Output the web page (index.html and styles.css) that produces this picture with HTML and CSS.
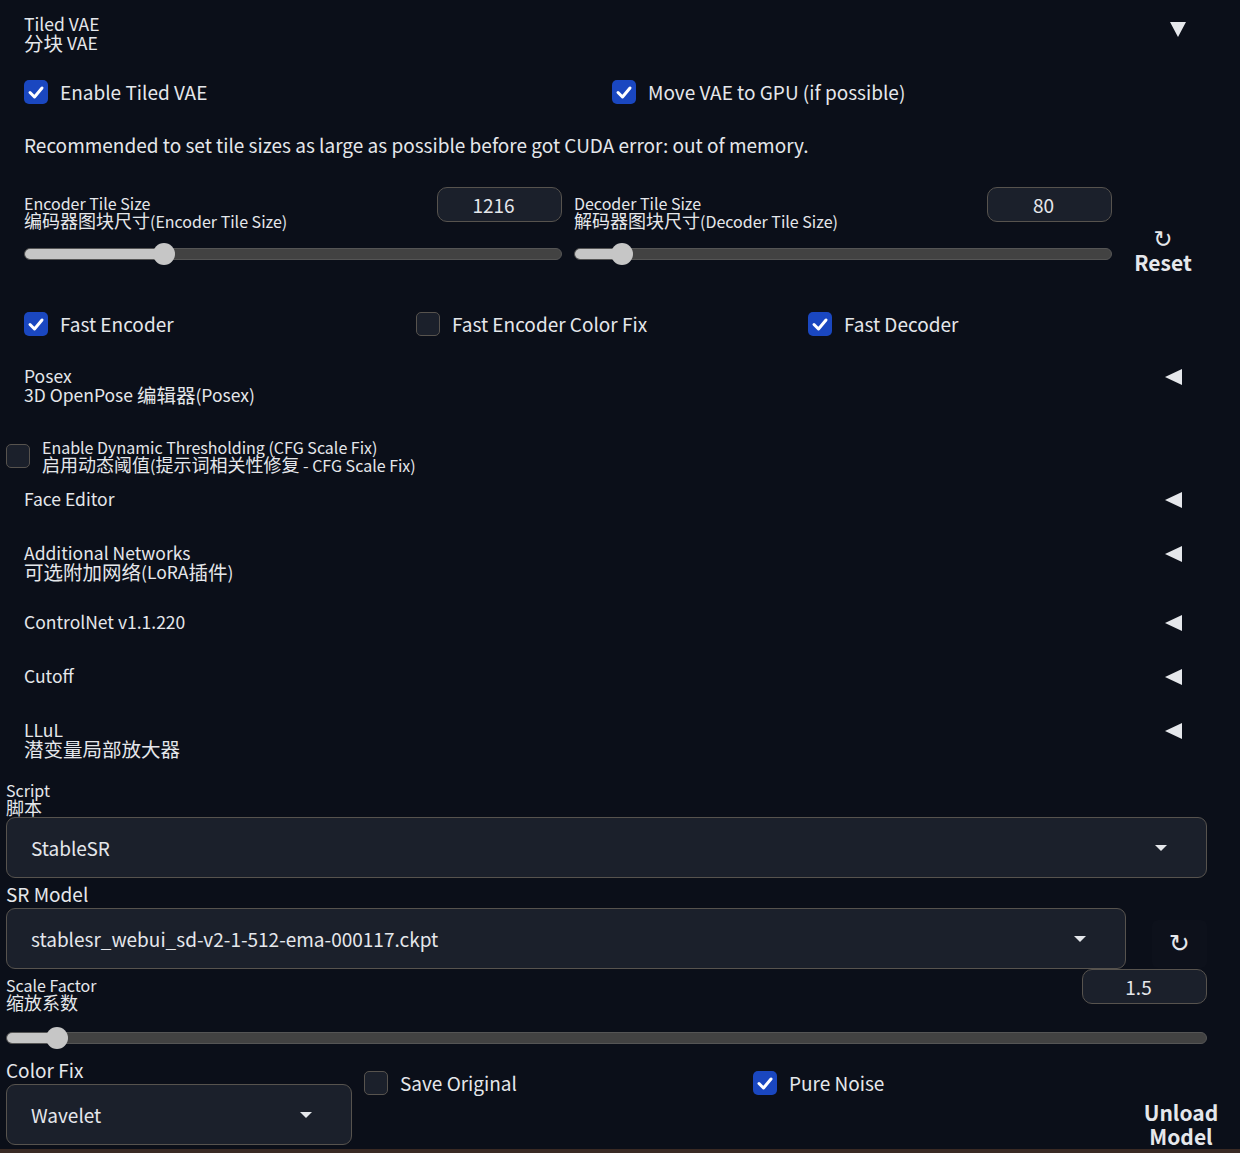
FILE: index.html
```html
<!DOCTYPE html>
<html lang="zh">
<head>
  <meta charset="UTF-8">
  <title>StableSR</title>
  <link rel="stylesheet" href="styles.css">
</head>
<body>

<div class="tiled">
  <div class="acc-head">
    <div class="acc-title">Tiled VAE<br><span class="zh">分块</span> VAE</div>
    <span class="arrow-down"></span>
  </div>

  <div class="check-row two">
    <label class="check"><span class="box on"></span>Enable Tiled VAE</label>
    <label class="check"><span class="box on"></span>Move VAE to GPU (if possible)</label>
  </div>

  <div class="note">Recommended to set tile sizes as large as possible before got CUDA error: out of memory.</div>

  <div class="tiles">
    <div class="tile">
      <div class="tile-top">
        <div class="small-label">Encoder Tile Size<br><span class="zh">编码器图块尺寸</span>(Encoder Tile Size)</div>
        <div class="num">1216</div>
      </div>
      <div class="slider"><div class="fill" style="width: 26%"></div></div>
    </div>
    <div class="tile">
      <div class="tile-top">
        <div class="small-label">Decoder Tile Size<br><span class="zh">解码器图块尺寸</span>(Decoder Tile Size)</div>
        <div class="num">80</div>
      </div>
      <div class="slider"><div class="fill" style="width: 8.7%"></div></div>
    </div>
    <div class="reset">
      <span class="refresh">↻</span>
      <span>Reset</span>
    </div>
  </div>

  <div class="check-row three">
    <label class="check"><span class="box on"></span>Fast Encoder</label>
    <label class="check"><span class="box"></span>Fast Encoder Color Fix</label>
    <label class="check"><span class="box on"></span>Fast Decoder</label>
  </div>
</div>

<div class="acc first">
  <div class="acc-title">Posex<br>3D OpenPose <span class="zh">编辑器</span>(Posex)</div>
  <span class="arrow-left"></span>
</div>

<label class="dyn">
  <span class="box"></span>
  <span class="small-label">Enable Dynamic Thresholding (CFG Scale Fix)<br><span class="zh">启用动态阈值</span>(<span class="zh">提示词相关性修复</span> - CFG Scale Fix)</span>
</label>

<div class="acc face">
  <div class="acc-title">Face Editor</div>
  <span class="arrow-left"></span>
</div>
<div class="acc">
  <div class="acc-title">Additional Networks<br><span class="zh">可选附加网络</span>(LoRA<span class="zh">插件</span>)</div>
  <span class="arrow-left"></span>
</div>
<div class="acc tight">
  <div class="acc-title">ControlNet v1.1.220</div>
  <span class="arrow-left"></span>
</div>
<div class="acc">
  <div class="acc-title">Cutoff</div>
  <span class="arrow-left"></span>
</div>
<div class="acc">
  <div class="acc-title">LLuL<br><span class="zh">潜变量局部放大器</span></div>
  <span class="arrow-left"></span>
</div>

<div class="script">
  <div class="small-label">Script<br><span class="zh">脚本</span></div>
  <div class="dropdown"><span>StableSR</span><span class="caret"></span></div>

  <div class="label">SR Model</div>
  <div class="model-row">
    <div class="dropdown grow"><span>stablesr_webui_sd-v2-1-512-ema-000117.ckpt</span><span class="caret"></span></div>
    <div class="refresh-btn">↻</div>
  </div>

  <div class="scale-top">
    <div class="small-label">Scale Factor<br><span class="zh">缩放系数</span></div>
    <div class="num">1.5</div>
  </div>
  <div class="slider"><div class="fill" style="width: 4.2%"></div></div>

  <div class="bottom-row">
    <div>
      <div class="label">Color Fix</div>
      <div class="dropdown narrow"><span>Wavelet</span><span class="caret"></span></div>
    </div>
    <label class="check low"><span class="box"></span>Save Original</label>
    <label class="check low"><span class="box on"></span>Pure Noise</label>
    <div class="unload">Unload<br>Model</div>
  </div>
</div>

<div class="footer-line"></div>

</body>
</html>
```

FILE: styles.css
```css
:root {
  --bg: #0b0f19;
  --text: #e5e7eb;
  --input-bg: #1b202b;
  --border: #57534e;
  --blue: #1a47c0;
  --track: #424242;
  --knob: #c6c6c6;
}

body {
  margin: 0;
  background: var(--bg);
  color: var(--text);
  font-family: "Noto Sans CJK SC", "Noto Sans", sans-serif;
  width: 1240px;
  height: 1153px;
  overflow: hidden;
}

/* bigger CJK glyphs without growing the line box */
.zh { line-height: 0; }

.tiled {
  padding: 14px 0 0 24px;
}

.acc-head,
.acc {
  display: flex;
  justify-content: space-between;
  align-items: flex-start;
}

.acc-head { padding-right: 54px; }

.acc {
  margin-top: 35px;
  padding: 0 58px 0 24px;
}

.acc.first { margin-top: 30px; }
.acc.face { margin-top: 15px; }
.acc.tight { margin-top: 31px; }

.acc-title {
  font-size: 17.5px;
  line-height: 19px;
}

.acc-title .zh {
  font-size: 19.5px;
  vertical-align: -1px;
}

.arrow-down {
  margin-top: 8px;
  width: 0;
  height: 0;
  border-left: 8px solid transparent;
  border-right: 8px solid transparent;
  border-top: 15px solid var(--text);
}

.arrow-left {
  margin-top: 3px;
  width: 0;
  height: 0;
  border-top: 8px solid transparent;
  border-bottom: 8px solid transparent;
  border-right: 17px solid var(--text);
}

.check-row {
  display: grid;
  margin-top: 28px;
}

.check-row.two { grid-template-columns: 588px 588px; }
.check-row.three { grid-template-columns: 392px 392px 392px; margin-top: 38px; }

.check {
  display: flex;
  align-items: center;
  gap: 12px;
  font-size: 19px;
  line-height: 24px;
}

.box {
  flex: none;
  width: 24px;
  height: 24px;
  box-sizing: border-box;
  border-radius: 5px;
  background: var(--input-bg);
  border: 1px solid var(--border);
}

.box.on {
  border: none;
  background: var(--blue) url("data:image/svg+xml,%3Csvg xmlns='http://www.w3.org/2000/svg' viewBox='0 0 24 24'%3E%3Cpolyline points='6,12.5 10.5,17 18,8' fill='none' stroke='white' stroke-width='3' stroke-linecap='round' stroke-linejoin='round'/%3E%3C/svg%3E") center / 24px no-repeat;
}

.note {
  margin-top: 29px;
  font-size: 19px;
  line-height: 24px;
}

.tiles {
  display: flex;
  gap: 12px;
  margin-top: 30px;
}

.tile { width: 538px; }

.tile-top,
.scale-top {
  display: flex;
  justify-content: space-between;
  align-items: flex-start;
}

.small-label {
  font-size: 16px;
  line-height: 18px;
}

.small-label .zh { font-size: 18px; }

.tile-top .small-label,
.scale-top .small-label { margin-top: 7px; }

.num {
  width: 125px;
  height: 35px;
  box-sizing: border-box;
  padding-right: 12px;
  border: 1px solid var(--border);
  border-radius: 10px;
  background: var(--input-bg);
  text-align: center;
  font-size: 19px;
  line-height: 33px;
}

.slider {
  position: relative;
  margin-top: 13px;
  height: 12px;
  border: 1px solid #555;
  border-radius: 7px;
  background: var(--track);
  box-sizing: border-box;
  top: 5px;
  margin-bottom: 10px;
}

.fill {
  position: relative;
  height: 100%;
  background: var(--knob);
  border-radius: 7px 0 0 7px;
}

.fill::after {
  content: "";
  position: absolute;
  right: -11px;
  top: -6px;
  width: 22px;
  height: 22px;
  border-radius: 50%;
  background: var(--knob);
}

.reset {
  width: 76px;
  margin-top: 41px;
  margin-left: 1px;
  display: flex;
  flex-direction: column;
  align-items: center;
  font-size: 21px;
  font-weight: bold;
  line-height: 23px;
}

.refresh {
  font-family: "DejaVu Sans", sans-serif;
  font-size: 23px;
  font-weight: normal;
}

.dyn {
  display: flex;
  align-items: center;
  gap: 12px;
  margin-top: 34px;
  padding-left: 6px;
}

.script {
  margin-top: 23px;
  padding: 0 33px 0 6px;
}

.dropdown {
  display: flex;
  justify-content: space-between;
  align-items: center;
  height: 61px;
  box-sizing: border-box;
  padding: 0 39px 0 24px;
  border: 1px solid var(--border);
  border-radius: 9px;
  background: var(--input-bg);
  font-size: 19px;
}

.caret {
  width: 0;
  height: 0;
  border-left: 6px solid transparent;
  border-right: 6px solid transparent;
  border-top: 6px solid var(--text);
}

.label {
  margin-top: 4px;
  font-size: 19px;
  line-height: 24px;
}

.model-row {
  display: flex;
  align-items: center;
  margin-top: 2px;
}

.grow { flex: 1; }

.refresh-btn {
  width: 55px;
  height: 48px;
  margin-left: 26px;
  margin-top: 10px;
  border-radius: 6px;
  background: #0d111b;
  text-align: center;
  font-family: "DejaVu Sans", sans-serif;
  font-size: 25px;
  line-height: 48px;
}

.scale-top { margin-top: 0; }

.script .slider { margin-top: 15px; margin-bottom: 0; }

.bottom-row {
  display: grid;
  grid-template-columns: 346px 377px 377px 78px;
  gap: 12px;
  margin-top: 19px;
  align-items: start;
}

.bottom-row .label { margin-top: 0; }

.narrow { margin-top: 2px; }

.check.low { margin-top: 13px; }

.unload {
  margin-top: 42px;
  text-align: center;
  font-size: 21px;
  font-weight: bold;
  line-height: 24px;
}

.footer-line {
  margin-top: 1px;
  height: 8px;
  background: #3a2a24;
}
```
